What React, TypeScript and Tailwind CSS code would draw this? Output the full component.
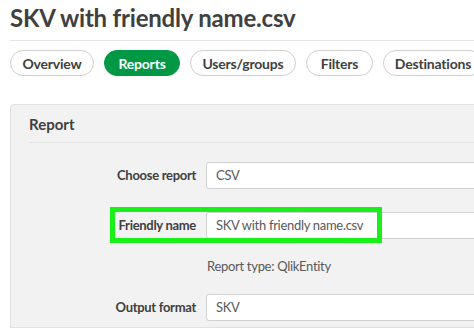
import React from "react";

const font = { fontFamily: "Lato, 'Open Sans', sans-serif" };

function Tab({ label, active, w }: { label: string; active?: boolean; w: string }) {
  return (
    <div
      className={
        "h-[26px] shrink-0 rounded-full flex items-center justify-center text-[14px] font-bold tracking-[-0.2px] " +
        w +
        (active
          ? " bg-[#009845] text-white border border-[#009845]"
          : " bg-white text-[#404040] border border-[#cfcfcf]")
      }
    >
      {label}
    </div>
  );
}

function Row({ label, value }: { label: string; value: string }) {
  return (
    <div className="flex items-center">
      <div className="w-[186px] shrink-0 text-right pr-[10px] text-[13px] font-bold tracking-[-0.3px] text-[#404040]">
        {label}
      </div>
      <div className="h-[27px] flex-1 bg-white border border-[#d0d0d0] rounded-[3px] flex items-center pl-[9px] text-[13px] tracking-[-0.3px] text-[#595959]">
        {value}
      </div>
    </div>
  );
}

export default function App() {
  return (
    <div className="w-[474px] h-[331px] overflow-hidden bg-white relative" style={font}>
      <div className="pl-[10px] w-[560px]">
        <div className="h-[40px] flex items-start pt-[3px] text-[24px] font-bold tracking-[-0.2px] text-[#404040] leading-[30px]">
          SKV with friendly name.csv
        </div>
        <div className="h-px bg-[#e6e6e6]" />
        <div className="flex gap-[10px] mt-[9px]">
          <Tab label="Overview" w="w-[84px]" />
          <Tab label="Reports" active w="w-[76px]" />
          <Tab label="Users/groups" w="w-[106px]" />
          <Tab label="Filters" w="w-[67px]" />
          <Tab label="Destinations" w="w-[100px]" />
        </div>
        <div className="mt-[28px] h-[224px] bg-[#f2f2f2] border border-[#e0e0e0] rounded-tl-[4px] pl-[18px]">
          <div className="h-[37px] flex items-center text-[15px] font-bold text-[#404040] pt-[1px]">
            Report
          </div>
          <div className="h-px bg-[#e3e3e3]" />
          <div className="mt-[19px] flex flex-col -ml-[9px]">
            <Row label="Choose report" value="CSV" />
            <div className="mt-[23px]">
              <Row label="Friendly name" value="SKV with friendly name.csv" />
            </div>
            <div className="h-[55px] flex items-center pl-[187px] text-[13px] tracking-[-0.3px] text-[#595959]">
              Report type: QlikEntity
            </div>
            <Row label="Output format" value="SKV" />
          </div>
        </div>
      </div>
      <div className="absolute left-[110px] top-[207px] w-[272px] h-[36px] border-[5px] border-[#19f019]" />
    </div>
  );
}
